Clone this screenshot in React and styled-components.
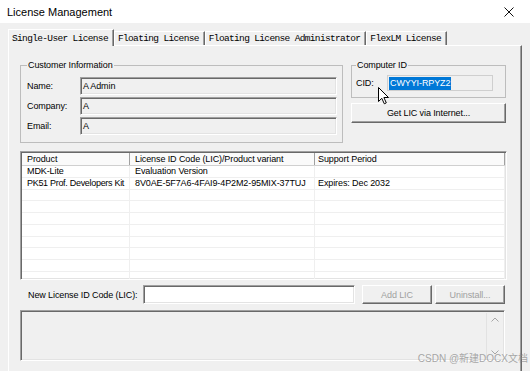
import React from "react";
import styled, { createGlobalStyle } from "styled-components";

const Global = createGlobalStyle`
  html, body { margin: 0; padding: 0; background: #f0f0f0; }
  body { width: 530px; height: 371px; overflow: hidden; font-family: "Liberation Sans", Arial, sans-serif; }
  * { box-sizing: border-box; }
`;

const Window = styled.div`
  position: relative;
  width: 530px;
  height: 371px;
  overflow: hidden;
  background: #f0f0f0;
  display: flex;
  flex-direction: column;
  color: #000;
`;

const TitleBar = styled.div`
  flex: none;
  height: 23px;
  background: #fff;
  display: flex;
  align-items: center;
  justify-content: space-between;
  padding: 0 16px 0 7px;
  font-size: 11px;
`;

const Body = styled.div`
  flex: 1;
  padding: 6px 0 0 8px;
  display: flex;
  flex-direction: column;
`;

const TabStrip = styled.div`
  display: flex;
  align-items: flex-end;
  height: 16px;
  position: relative;
  z-index: 1;
`;

const Tab = styled.div`
  height: ${(p) => (p.$active ? "17px" : "14px")};
  margin-bottom: ${(p) => (p.$active ? "-1px" : "0")};
  padding: ${(p) => (p.$active ? "1px 5px 0 3px" : "0 5px 0 3px")};
  display: flex;
  align-items: center;
  background: #f0f0f0;
  border-top: 1px solid #fff;
  border-left: 1px solid #fff;
  border-right: 1px solid #696969;
  box-shadow: inset -1px 0 0 #a0a0a0;
  font-family: "Liberation Mono", "Courier New", monospace;
  font-size: 9.5px;
  letter-spacing: -0.65px;
  white-space: nowrap;
`;

const Panel = styled.div`
  flex: 1;
  width: 514px;
  border-top: 1px solid #fff;
  border-left: 1px solid #fff;
  border-right: 1px solid #696969;
  box-shadow: inset -1px 0 0 #a0a0a0;
  padding: 13px 14px 0 11px;
  display: flex;
  flex-direction: column;
  font-size: 9px;
  letter-spacing: -0.1px;
`;

const TopRow = styled.div`
  display: flex;
  align-items: flex-start;
  gap: 8px;
`;

const Group = styled.fieldset`
  position: relative;
  margin: 0;
  min-width: 0;
  width: ${(p) => p.$w}px;
  border: 1px solid #bdbdbd;
  padding: ${(p) => p.$pad};
`;

const Legend = styled.legend`
  padding: 0 1px;
  margin: 0;
  font-size: 9px;
  line-height: 12px;
`;

const FormGrid = styled.div`
  display: grid;
  grid-template-columns: 53px 257px;
  row-gap: 2px;
  align-items: center;
`;

const Label = styled.div`
  font-size: 9px;
  white-space: nowrap;
`;

const Field = styled.div`
  height: ${(p) => p.$h || 18}px;
  background: ${(p) => (p.$white ? "#fff" : "#f0f0f0")};
  border-top: 1px solid #a0a0a0;
  border-left: 1px solid #a0a0a0;
  border-right: 1px solid #fff;
  border-bottom: 1px solid #fff;
  box-shadow: inset 1px 1px 0 #696969, inset -1px -1px 0 #e3e3e3;
  padding-left: 2px;
  display: flex;
  align-items: center;
  font-size: 9px;
  white-space: nowrap;
`;

const RightCol = styled.div`
  width: 155px;
  display: flex;
  flex-direction: column;
  gap: 5px;
`;

const CidRow = styled.div`
  display: flex;
  align-items: center;
`;

const CidLabel = styled.div`
  width: 31px;
  font-size: 9px;
`;

const CidInput = styled.div`
  width: 106px;
  height: 16px;
  border: 1px solid #cfcfcf;
  background: #f0f0f0;
  display: flex;
  align-items: center;
  padding-left: 1px;
`;

const Selected = styled.span`
  background: #0078d7;
  color: #fff;
  font-size: 9px;
  line-height: 13px;
  padding: 0 1px;
`;

const Cursor = styled.svg`
  position: absolute;
  left: 26px;
  top: 16px;
`;

const Button = styled.div`
  height: ${(p) => p.$h || 20}px;
  width: ${(p) => (p.$w ? `${p.$w}px` : "100%")};
  flex: none;
  background: #f0f0f0;
  border-top: 1px solid #fff;
  border-left: 1px solid #fff;
  border-right: 1px solid #696969;
  border-bottom: 1px solid #696969;
  box-shadow: inset -1px -1px 0 #a0a0a0;
  display: flex;
  align-items: center;
  justify-content: center;
  font-size: 9px;
  color: ${(p) => (p.$disabled ? "#a0a0a0" : "#000")};
  white-space: nowrap;
`;

const List = styled.div`
  margin-top: 8px;
  height: 129px;
  overflow: hidden;
  background: #fff;
  border-top: 1px solid #a0a0a0;
  border-left: 1px solid #a0a0a0;
  border-right: 1px solid #fff;
  border-bottom: 1px solid #fff;
  box-shadow: inset 1px 1px 0 #696969, inset -1px -1px 0 #e3e3e3;
  padding: 1px;
`;

const Cols = "108px 185px 1fr";

const HeaderRow = styled.div`
  display: grid;
  grid-template-columns: ${Cols};
  height: 13px;
  border-bottom: 1px solid #d0d0d0;
  background: #fafafa;
`;

const HeaderCell = styled.div`
  border-right: 1px solid #a0a0a0;
  padding-left: ${(p) => p.$pl || 5}px;
  display: flex;
  align-items: center;
  font-size: 9px;
  white-space: nowrap;
  overflow: hidden;
`;

const Row = styled.div`
  display: grid;
  grid-template-columns: ${Cols};
  height: 11.75px;
  border-bottom: 1px solid #efefef;
`;

const Cell = styled.div`
  border-right: 1px solid #efefef;
  padding-left: ${(p) => p.$pl || 5}px;
  display: flex;
  align-items: center;
  font-size: 9px;
  letter-spacing: ${(p) => (p.$tight ? "-0.3px" : "inherit")};
  white-space: nowrap;
  overflow: hidden;
`;

const LicRow = styled.div`
  margin-top: 5px;
  height: 19px;
  display: flex;
  align-items: center;
`;

const LicLabel = styled.div`
  width: 123px;
  padding-left: 8px;
  font-size: 9px;
  white-space: nowrap;
`;

const LicInput = styled(Field)`
  width: 212px;
  margin-right: 7px;
`;

const ButtonGap = styled.div`
  width: 3px;
  flex: none;
`;

const Output = styled.div`
  margin-top: 6px;
  height: 51px;
  width: 485px;
  background: #f0f0f0;
  border-top: 1px solid #a0a0a0;
  border-left: 1px solid #a0a0a0;
  border-right: 1px solid #fff;
  border-bottom: 1px solid #fff;
  box-shadow: inset 1px 1px 0 #696969, inset -1px -1px 0 #e3e3e3;
  display: flex;
  justify-content: flex-end;
  padding: 2px;
`;

const ScrollBar = styled.div`
  width: 16px;
  border-left: 1px solid #e2e2e2;
  display: flex;
  flex-direction: column;
  justify-content: space-between;
  align-items: center;
  padding: 4px 0 3px;
`;

const Watermark = styled.div`
  position: absolute;
  right: 2px;
  bottom: 6px;
  font-family: "Liberation Sans", "Noto Sans CJK SC", sans-serif;
  font-size: 10px;
  color: rgba(140, 140, 140, 0.75);
  white-space: nowrap;
`;

const Chevron = ({ up }) => (
  <svg width="8" height="5" viewBox="0 0 8 5">
    <path
      d={up ? "M0.5 4.5 L4 1 L7.5 4.5" : "M0.5 0.5 L4 4 L7.5 0.5"}
      fill="none"
      stroke="#a6a6a6"
      strokeWidth="1"
    />
  </svg>
);

const emptyRows = Array.from({ length: 8 });

export default function App() {
  return (
    <>
      <Global />
      <Window>
        <TitleBar>
          <span>License Management</span>
          <svg width="10" height="10" viewBox="0 0 10 10">
            <path d="M0.5 0.5 L9.5 9.5 M9.5 0.5 L0.5 9.5" stroke="#111" strokeWidth="1" />
          </svg>
        </TitleBar>
        <Body>
          <TabStrip>
            <Tab $active>Single-User License</Tab>
            <Tab>Floating License</Tab>
            <Tab>Floating License Administrator</Tab>
            <Tab>FlexLM License</Tab>
          </TabStrip>
          <Panel>
            <TopRow>
              <Group $w={323} $pad="6px 5px 7px 6px">
                <Legend>Customer Information</Legend>
                <FormGrid>
                  <Label>Name:</Label>
                  <Field>A Admin</Field>
                  <Label>Company:</Label>
                  <Field>A</Field>
                  <Label>Email:</Label>
                  <Field>A</Field>
                </FormGrid>
              </Group>
              <RightCol>
                <Group $w={155} $pad="4px 11px 6px 4px">
                  <Legend>Computer ID</Legend>
                  <CidRow>
                    <CidLabel>CID:</CidLabel>
                    <CidInput>
                      <Selected>CWYYI-RPYZ2</Selected>
                    </CidInput>
                  </CidRow>
                  <Cursor width="12" height="18" viewBox="0 0 12 18">
                    <path
                      d="M0.5 0.5 L0.5 14.5 L3.8 11.3 L6.3 16.8 L8.3 15.9 L5.9 10.5 L10.5 10.5 Z"
                      fill="#fff"
                      stroke="#000"
                      strokeWidth="1"
                      strokeLinejoin="round"
                    />
                  </Cursor>
                </Group>
                <Button>Get LIC via Internet...</Button>
              </RightCol>
            </TopRow>
            <List>
              <HeaderRow>
                <HeaderCell>Product</HeaderCell>
                <HeaderCell>License ID Code (LIC)/Product variant</HeaderCell>
                <HeaderCell $pl={3}>Support Period</HeaderCell>
              </HeaderRow>
              <Row>
                <Cell>MDK-Lite</Cell>
                <Cell>Evaluation Version</Cell>
                <Cell $pl={3}></Cell>
              </Row>
              <Row>
                <Cell $tight>PK51 Prof. Developers Kit</Cell>
                <Cell>8V0AE-5F7A6-4FAI9-4P2M2-95MIX-37TUJ</Cell>
                <Cell $pl={3}>Expires: Dec 2032</Cell>
              </Row>
              {emptyRows.map((_, i) => (
                <Row key={i}>
                  <Cell />
                  <Cell />
                  <Cell />
                </Row>
              ))}
            </List>
            <LicRow>
              <LicLabel>New License ID Code (LIC):</LicLabel>
              <LicInput $white $h={19} />
              <Button $w={70} $h={19} $disabled>Add LIC</Button>
              <ButtonGap />
              <Button $w={70} $h={19} $disabled>Uninstall...</Button>
            </LicRow>
            <Output>
              <ScrollBar>
                <Chevron up />
                <Chevron />
              </ScrollBar>
            </Output>
          </Panel>
        </Body>
        <Watermark>CSDN @新建DOCX文档</Watermark>
      </Window>
    </>
  );
}
